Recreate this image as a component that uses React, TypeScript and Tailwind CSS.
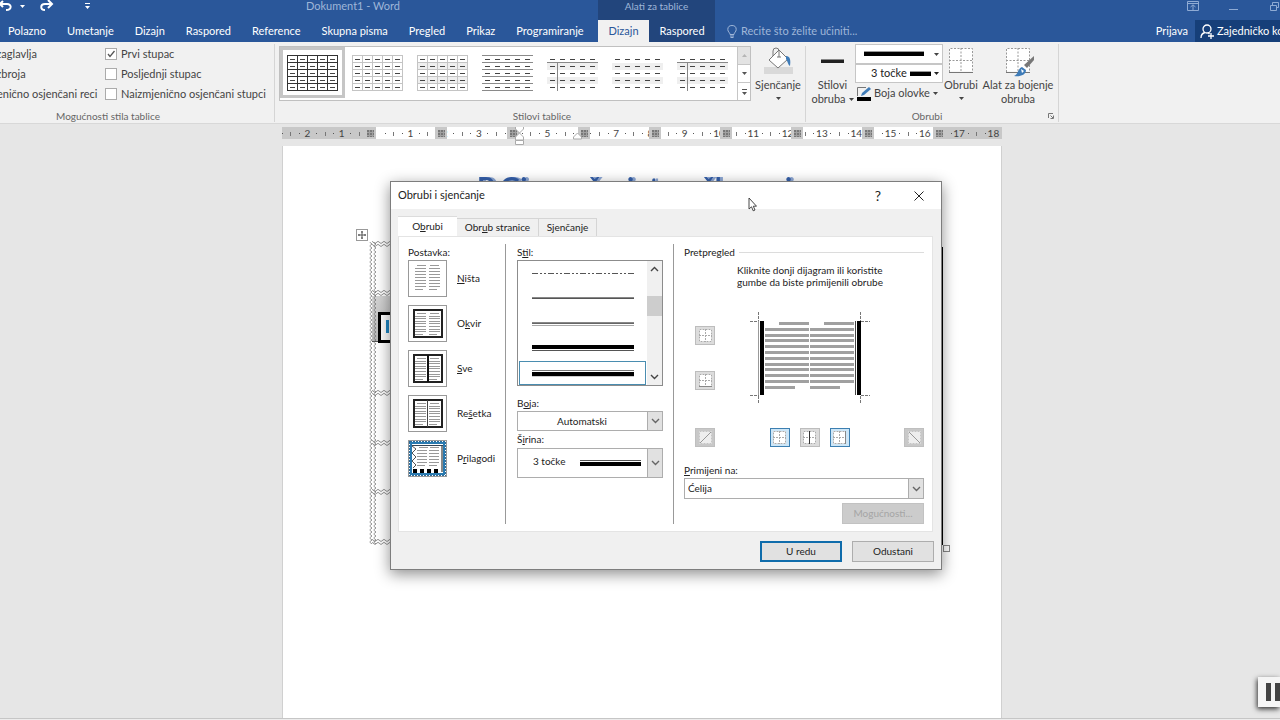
import type { ReactNode } from "react";
import { clsx } from "clsx";

const TABS = [
  "Polazno",
  "Umetanje",
  "Dizajn",
  "Raspored",
  "Reference",
  "Skupna pisma",
  "Pregled",
  "Prikaz",
  "Programiranje",
];

type StyleKind = "grid" | "gridLight" | "gridBanded" | "rows" | "column" | "banded";

const TABLE_STYLES: StyleKind[] = [
  "grid",
  "gridLight",
  "gridBanded",
  "rows",
  "column",
  "banded",
  "column",
];

function Caret({ className }: { className?: string }) {
  return (
    <svg width="5" height="3" viewBox="0 0 5 3" className={clsx("shrink-0", className)}>
      <path d="M0 0H5L2.5 3Z" fill="currentColor" />
    </svg>
  );
}

function Chevron({ up = false }: { up?: boolean }) {
  return (
    <svg width="9" height="6" viewBox="0 0 9 6" fill="none" stroke="currentColor">
      <path d={up ? "M1 5L4.5 1.5L8 5" : "M1 1L4.5 4.5L8 1"} strokeWidth="1.4" />
    </svg>
  );
}

/* Thumbnail of one table style: 5 x 5 cells with a dash in each */
function StyleThumb({ kind }: { kind: StyleKind }) {
  const steps = [0, 1, 2, 3, 4];
  const line = kind === "grid" ? "#333" : "#c4c4c4";
  const isGrid = kind === "grid" || kind === "gridLight" || kind === "gridBanded";
  const isBanded = kind === "gridBanded" || kind === "column" || kind === "banded";
  return (
    <svg width="53" height="38" viewBox="0 0 53 38" shapeRendering="crispEdges">
      {isBanded &&
        [1, 3].map((r) => (
          <rect key={r} x="1" y={r * 7 + 2} width="51" height="7" fill="#efefef" />
        ))}
      {isGrid &&
        [0, 1, 2, 3, 4, 5].map((i) => (
          <g key={i} fill={line}>
            <rect x={1 + i * 10} y="1" width="1" height="36" />
            <rect x="1" y={1 + i * 7} width="51" height="1" />
          </g>
        ))}
      {kind === "rows" &&
        [0, 1, 2, 3, 4, 5].map((i) => (
          <rect key={i} x="1" y={1 + i * 7} width="51" height="1" fill="#8a8a8a" />
        ))}
      {kind === "column" && (
        <g fill="#888">
          <rect x="1" y="8" width="51" height="1" />
          <rect x="11" y="8" width="1" height="29" />
        </g>
      )}
      {steps.map((r) =>
        steps.map((c) => (
          <rect
            key={`${r}-${c}`}
            x={4 + c * 10}
            y={5 + r * 7}
            width="5"
            height="1"
            fill="#444"
          />
        )),
      )}
    </svg>
  );
}

function TitleBar() {
  return (
    <header className="flex h-[42px] shrink-0 bg-[#2a579a] text-[11px] text-white">
      <div className="flex w-[598px] shrink-0 flex-col justify-between">
        <div className="flex h-3 items-center text-[#9fb6d8]">
          <div className="flex w-[306px] items-center text-white">
            <button type="button" aria-label="Poništi" className="flex items-center gap-2">
              <svg width="12" height="12" viewBox="0 0 12 12" fill="none" stroke="currentColor" strokeWidth="2">
                <path d="M0 4H7C12 4 12 10 6 10M3 1L0 4L3 7" />
              </svg>
              <Caret />
            </button>
            <button type="button" aria-label="Ponovi" className="ml-[15px]">
              <svg width="14" height="12" viewBox="0 0 14 12" fill="none" stroke="currentColor" strokeWidth="2">
                <path d="M12 4H5C0 4 0 10 5 10M8 0L12 4L8 8" />
              </svg>
            </button>
            <button type="button" aria-label="Prilagodi alatnu traku" className="ml-[31px]">
              <svg width="5" height="6" viewBox="0 0 5 6" fill="currentColor">
                <path d="M0 0H5V1H0ZM0 3H5L2.5 6Z" />
              </svg>
            </button>
          </div>
          <span className="leading-3">Dokument1 - Word</span>
        </div>
        <nav className="flex h-[22px] items-center gap-[21px] pl-2">
          {TABS.map((tab) => (
            <button key={tab} type="button" className="whitespace-nowrap">
              {tab}
            </button>
          ))}
        </nav>
      </div>

      <div className="flex w-[117px] shrink-0 flex-col justify-between bg-[#22457c]">
        <span className="text-center text-[10px] leading-3 text-[#9fb6d8]">Alati za tablice</span>
        <nav className="flex h-[22px]">
          <button type="button" className="w-[51px] bg-[#f1f1f1] text-[#2a579a]">
            Dizajn
          </button>
          <button type="button" className="flex-1">
            Raspored
          </button>
        </nav>
      </div>

      <div className="flex min-w-0 flex-1 flex-col justify-between">
        <div className="flex h-3 items-center justify-end text-[#8fabd4]">
          <button type="button" aria-label="Mogućnosti prikaza vrpce" className="mr-[30px]">
            <svg width="12" height="10" viewBox="0 0 12 10" fill="none" stroke="currentColor">
              <path d="M0.5 0.5H11.5V9.5H0.5ZM0.5 2.5H11.5M6 9V4M3.5 6L6 3.8L8.5 6" />
            </svg>
          </button>
          <button type="button" aria-label="Minimiziraj" className="mr-8">
            <svg width="9" height="9" viewBox="0 0 9 9">
              <path d="M0 7H9V8H0Z" fill="currentColor" />
            </svg>
          </button>
          <button type="button" aria-label="Vrati" className="mr-px">
            <svg width="9" height="9" viewBox="0 0 9 9" fill="none" stroke="currentColor">
              <path d="M0.5 3.5H6.5V8.5H0.5ZM2.5 3V0.5H8.5V5.5H7" />
            </svg>
          </button>
        </div>
        <div className="flex h-[22px] items-center">
          <label htmlFor="tell-me" className="pl-3 text-[#9fb6d8]" aria-label="Recite što želite učiniti">
            <svg width="10" height="13" viewBox="0 0 10 13" fill="none" stroke="currentColor">
              <path d="M3 9.5C3 7.5 0.8 7 0.8 4.5A4.2 4 0 0 1 9.2 4.5C9.2 7 7 7.5 7 9.5ZM3 11H7M3.5 12.5H6.5" />
            </svg>
          </label>
          <input
            id="tell-me"
            placeholder="Recite što želite učiniti..."
            className="ml-1 w-40 bg-transparent outline-none placeholder:text-[#9fb6d8]"
          />
          <button type="button" className="mr-[7px] ml-auto">
            Prijava
          </button>
          <button
            type="button"
            className="flex h-full w-[85px] items-center gap-[3px] overflow-hidden bg-[#163f79] pl-[5px] whitespace-nowrap"
          >
            <svg width="14" height="15" viewBox="0 0 14 15" fill="none" stroke="currentColor" strokeWidth="1.3" className="shrink-0">
              <circle cx="7" cy="5" r="4" />
              <path d="M1 14C1 11 3 9 5 8.5M8 8.5L9.5 10M11 9V15M8 12H14" />
            </svg>
            Zajedničko korištenje
          </button>
        </div>
      </div>
    </header>
  );
}

function Check({ id, label, checked = false }: { id: string; label: string; checked?: boolean }) {
  return (
    <label htmlFor={id} className="flex h-5 items-center gap-1 whitespace-nowrap">
      <span className="relative flex size-3 shrink-0">
        <input
          id={id}
          type="checkbox"
          defaultChecked={checked}
          className="peer size-3 appearance-none border border-[#ababab] bg-white"
        />
        <svg
          viewBox="0 0 12 12"
          fill="none"
          stroke="#555"
          strokeWidth="1.3"
          className="pointer-events-none absolute inset-0 hidden peer-checked:block"
        >
          <path d="M3 6L5 8.5L9.5 3" />
        </svg>
      </span>
      {label}
    </label>
  );
}

function GroupLabel({ children }: { children: ReactNode }) {
  return <div className="text-center text-[10px] leading-3 text-[#666]">{children}</div>;
}

function BorderGridIcon() {
  return (
    <svg width="24" height="25" viewBox="0 0 24 25" fill="none" stroke="#999">
      <rect x="0.5" y="0.5" width="23" height="23" fill="#fff" stroke="none" />
      <path d="M0.5 24V0.5H23.5V24M12 0V24M0 12.5H24" strokeDasharray="2 1.5" />
      <path d="M0 24.5H24" stroke="#777" />
    </svg>
  );
}

function Ribbon() {
  return (
    <section className="flex h-[82px] shrink-0 border-b border-[#d8d8d8] bg-[#f1f1f1] text-[11px] text-[#444]">
      {/* Table style options */}
      <div className="mt-[2px] mb-px flex w-[275px] shrink-0 flex-col justify-between border-r border-[#d5d5d5]">
        <div className="flex overflow-hidden">
          <div className="-ml-[52px] w-[157px] shrink-0">
            <Check id="header-row" label="Redak zaglavlja" />
            <Check id="total-row" label="Redak zbroja" />
            <Check id="banded-rows" label="Naizmjenično osjenčani reci" />
          </div>
          <div>
            <Check id="first-col" label="Prvi stupac" checked />
            <Check id="last-col" label="Posljednji stupac" />
            <Check id="banded-cols" label="Naizmjenično osjenčani stupci" />
          </div>
        </div>
        <div className="pr-[58px]">
          <GroupLabel>Mogućnosti stila tablice</GroupLabel>
        </div>
      </div>

      {/* Table styles */}
      <div className="mt-1 mb-px flex w-[531px] shrink-0 flex-col justify-between border-r border-[#d5d5d5] pl-1">
        <div className="flex">
          <div className="flex h-[55px] w-[472px] border border-[#c0c0c0] bg-white">
            {TABLE_STYLES.map((kind, i) => (
              <button
                key={i}
                type="button"
                aria-label={`Stil tablice ${i + 1}`}
                className={clsx(
                  "flex h-[51px] w-[65px] items-center justify-center border-[3px]",
                  i === 0 ? "border-[#c6c6c6]" : "border-transparent",
                )}
              >
                <StyleThumb kind={kind} />
              </button>
            ))}
            <div className="ml-auto flex w-[13px] flex-col divide-y divide-[#c6c6c6] border-l border-[#c6c6c6]">
              <button type="button" aria-label="Gore" className="flex flex-1 items-center justify-center bg-[#e3e3e3] text-[#b5b5b5]">
                <Caret className="rotate-180" />
              </button>
              <button type="button" aria-label="Dolje" className="flex flex-1 items-center justify-center text-[#555]">
                <Caret />
              </button>
              <button type="button" aria-label="Više" className="flex flex-1 items-center justify-center text-[#555]">
                <svg width="5" height="6" viewBox="0 0 5 6" fill="currentColor">
                  <path d="M0 0H5V1H0ZM0 3H5L2.5 6Z" />
                </svg>
              </button>
            </div>
          </div>
          <button type="button" className="flex flex-1 flex-col items-center pt-px">
            <svg width="29" height="28" viewBox="0 0 29 28" fill="none">
              <rect x="0" y="20" width="29" height="7" fill="#d9d9d9" />
              <path d="M5 13L15 3L24 12L14 21Z" fill="#fff" stroke="#777" />
              <path d="M9 9V4A3 3 0 0 1 15 4V10M13 10H17" stroke="#777" />
              <path d="M22 9C26 9 27 13 26 19C24 18 24 15 22 12Z" fill="#3f7cb8" />
            </svg>
            <span className="leading-5">Sjenčanje</span>
            <Caret className="mt-[2px]" />
          </button>
        </div>
        <GroupLabel>Stilovi tablice</GroupLabel>
      </div>

      {/* Borders */}
      <div className="mt-[2px] mb-px flex w-[253px] shrink-0 flex-col justify-between border-r border-[#d5d5d5]">
        <div className="flex">
          <button type="button" className="flex w-[49px] shrink-0 flex-col items-center pt-[2px] pl-1 leading-[14px]">
            <svg width="23" height="32" viewBox="0 0 23 32" shapeRendering="crispEdges">
              <rect y="13" width="23" height="1" fill="#888" />
              <rect y="14" width="23" height="3" fill="#222" />
            </svg>
            <span>Stilovi</span>
            <span className="flex items-center gap-[3px]">
              obruba <Caret />
            </span>
          </button>
          <div className="flex w-[88px] shrink-0 flex-col">
            <button type="button" aria-label="Stil crte" className="flex h-5 items-center justify-between border border-[#c6c6c6] bg-white pr-[3px] pl-2">
              <svg width="60" height="6" viewBox="0 0 60 6" shapeRendering="crispEdges">
                <rect width="60" height="1" fill="#999" />
                <rect y="1" width="60" height="4" fill="#000" />
              </svg>
              <Caret />
            </button>
            <button type="button" aria-label="Debljina crte" className="flex h-[19px] items-center justify-between border border-[#c6c6c6] bg-white pr-[3px] pl-[15px] text-[#222]">
              3 točke
              <svg width="21" height="6" viewBox="0 0 21 6" shapeRendering="crispEdges">
                <rect width="21" height="1" fill="#999" />
                <rect y="1" width="21" height="4" fill="#000" />
              </svg>
              <Caret />
            </button>
            <button type="button" className="flex h-[21px] items-center gap-[3px] pl-[2px] whitespace-nowrap">
              <svg width="14" height="14" viewBox="0 0 14 14" fill="none" className="shrink-0">
                <path d="M9 0.5H0.5V9" stroke="#777" />
                <path d="M4 9L5 6L12 0L14 2L7 8Z" fill="#3f7cb8" />
                <rect y="10" width="14" height="4" fill="#000" />
              </svg>
              Boja olovke
              <Caret />
            </button>
          </div>
          <button type="button" className="flex w-9 shrink-0 flex-col items-center pt-1">
            <BorderGridIcon />
            <span className="mt-[2px] leading-5">Obrubi</span>
            <Caret className="mt-[2px]" />
          </button>
          <button type="button" className="flex w-[78px] shrink-0 flex-col items-center pt-1 leading-[14px]">
            <span className="relative mb-[5px]">
              <BorderGridIcon />
              <svg width="21" height="22" viewBox="0 0 21 22" className="absolute top-2 left-2">
                <path d="M20 0V4L13 12L10 9Z" fill="#777" />
                <path d="M0 20C4 19 4 12 8 11L12 14C12 19 6 21 0 20Z" fill="#3f7cb8" />
                <path d="M7 13L10 15L8 17Z" fill="#fff" />
              </svg>
            </span>
            <span className="whitespace-nowrap">Alat za bojenje</span>
            <span>obruba</span>
          </button>
        </div>
        <div className="flex items-center">
          <div className="flex-1">
            <GroupLabel>Obrubi</GroupLabel>
          </div>
          <button type="button" aria-label="Obrubi i sjenčanje" className="mr-1">
            <svg width="6" height="6" viewBox="0 0 6 6" fill="none" stroke="#777">
              <path d="M0.5 5V0.5H5M2.5 2.5L5 5M5.5 2.5V5.5H2.5" />
            </svg>
          </button>
        </div>
      </div>
    </section>
  );
}

const CM = 34.3;
const COLUMN_MARKS = [82, 153, 225, 296, 367, 438, 509, 580, 651];

function Ruler() {
  const ticks = [];
  for (let n = -2; n <= 18; n++) {
    const x = 94 + n * CM;
    ticks.push(
      <g key={n}>
        {n !== 0 && (
          <text x={x} y="10" textAnchor="middle" fontSize="10" fill="#444">
            {Math.abs(n)}
          </text>
        )}
        <rect x={Math.round(x - CM / 2)} y="5" width="1" height="4" fill="#777" />
        <rect x={Math.round(x - CM / 4)} y="6" width="1" height="1" fill="#555" />
        <rect x={Math.round(x - (CM * 3) / 4)} y="6" width="1" height="1" fill="#555" />
      </g>,
    );
  }
  return (
    <svg width="720" height="18" viewBox="0 0 720 18" className="block">
      <rect width="720" height="12" fill="#fff" />
      <rect width="94" height="12" fill="#c8c8c8" />
      <rect x="657" width="63" height="12" fill="#c8c8c8" />
      {ticks}
      {COLUMN_MARKS.map((x) => (
        <g key={x} shapeRendering="crispEdges">
          <rect x={x} width="12" height="12" fill="#c8c8c8" />
          <rect x={x + 3} y="3" width="7" height="7" fill="#777" />
          <path d={`M${x + 3} 5.5H${x + 10}M${x + 3} 8.5H${x + 10}M${x + 5.5} 3V10M${x + 8.5} 3V10`} stroke="#a0a0a0" />
        </g>
      ))}
      <g fill="#fff" stroke="#aaa">
        <path d="M233.5 -1H241.5V2L237.5 6L233.5 2Z" />
        <path d="M233.5 13V10L237.5 6L241.5 10V13ZM233.5 13.5H241.5V17.5H233.5Z" />
        <path d="M291.5 12V10L295.5 6L299.5 10V12Z" />
      </g>
    </svg>
  );
}

/* Decorative heading at the top of the page */
function WordArt() {
  const parts: [number, string][] = [
    [194, "P"],
    [217, "Gi"],
    [305, "ž"],
    [344, "i"],
    [366, "t"],
    [419, "žb"],
    [502, "i"],
  ];
  return (
    <svg
      width="719"
      height="60"
      viewBox="0 0 719 60"
      fontSize="28"
      fontWeight="700"
      fill="#3560ab"
      className="drop-shadow-[3px_0_0_#8fa9d6]"
      aria-hidden="true"
    >
      {parts.map(([x, t]) => (
        <text key={x} x={x} y="52">
          {t}
        </text>
      ))}
    </svg>
  );
}

/* The document table, with its wavy border and move / resize handles */
function DocumentTable() {
  return (
    <svg width="600" height="330" viewBox="0 0 600 330" className="ml-[73px]" aria-hidden="true">
      <defs>
        <pattern id="wave-v" width="4" height="4" patternUnits="userSpaceOnUse">
          <path d="M0.5 0L3 2L0.5 4" fill="none" stroke="#666" strokeWidth="0.7" />
        </pattern>
        <pattern id="wave-h" width="6" height="3" patternUnits="userSpaceOnUse">
          <path d="M0 0.3L3 2.5L6 0.3" fill="none" stroke="#666" strokeWidth="0.7" />
        </pattern>
        <linearGradient id="cell" x1="0" x2="0" y1="0" y2="1">
          <stop offset="0" stopColor="#d4d4d4" />
          <stop offset="1" stopColor="#b8b8b8" />
        </linearGradient>
      </defs>
      <rect x="0.5" y="0.5" width="11" height="11" fill="#fff" stroke="#999" />
      <path d="M6 2V10M2 6H10M5 3H7M5 9H7M3 5V7M9 5V7" stroke="#555" fill="none" />
      <rect x="16" y="67" width="80" height="45" fill="url(#cell)" />
      <path d="M16 112.5H90" stroke="#555" />
      <rect x="23.5" y="84.5" width="60" height="28" fill="#fff" stroke="#000" strokeWidth="3" />
      <rect x="30" y="91" width="3" height="13" fill="#1f87c4" />
      {[12, 61, 161, 211, 260, 310].map((y) => (
        <g key={y} transform={`translate(16 ${y})`}>
          <rect width="568" height="6" fill="url(#wave-h)" />
        </g>
      ))}
      <g transform="translate(13 13)">
        <rect width="8" height="302" fill="url(#wave-v)" />
      </g>
      <rect x="583" y="18" width="4" height="298" fill="#000" />
      <rect x="587.5" y="316.5" width="6" height="6" fill="#fff" stroke="#888" />
    </svg>
  );
}

type Setting = "none" | "box" | "all" | "grid" | "custom";

const SETTINGS: { kind: Setting; label: ReactNode }[] = [
  { kind: "none", label: <><u>N</u>išta</> },
  { kind: "box", label: <>O<u>k</u>vir</> },
  { kind: "all", label: <><u>S</u>ve</> },
  { kind: "grid", label: <>Re<u>š</u>etka</> },
  { kind: "custom", label: <>P<u>r</u>ilagodi</> },
];

function SettingIcon({ kind }: { kind: Setting }) {
  const custom = kind === "custom";
  const count = custom ? 7 : 9;
  const rows = Array.from({ length: count }, (_, i) => i);
  const left = custom ? 9 : 7;
  const top = custom ? 7 : kind === "none" ? 5 : 8;
  const gap = kind === "none" || custom ? 3 : 2.6;
  return (
    <svg width="39" height="37" viewBox="0 0 39 37" shapeRendering="crispEdges">
      <rect x="0.5" y="0.5" width="38" height="36" fill="#fff" stroke="#999" />
      {rows.map((r) => {
        const first = r === 0;
        const w = first ? 9 : r === count - 1 ? 8 : custom ? 10 : 11;
        const y = Math.round(top + r * gap);
        return (
          <g key={r} fill="#999">
            <rect x={first ? left + 2 : left} y={y} width={w} height="1" />
            <rect x={first ? 22 : 21} y={y} width={w} height="1" />
          </g>
        );
      })}
      {(kind === "box" || kind === "all" || kind === "grid") && (
        <rect x="6" y="5" width="28" height="27" fill="none" stroke="#222" strokeWidth="2" />
      )}
      {kind === "all" && <rect x="19" y="5" width="2" height="27" fill="#111" />}
      {kind === "grid" && <rect x="19" y="5" width="1" height="27" fill="#444" />}
      {custom && (
        <g fill="none">
          <rect x="1.5" y="1.5" width="36" height="34" stroke="#2b6c9c" strokeDasharray="2 1" />
          <rect x="3" y="3" width="33" height="31" stroke="#2a7ab0" strokeWidth="2" />
          <path d="M4 5.5H35" stroke="#345" />
          <path d="M4 6L8 9L4 13L8 17L4 21L8 25L5 28" stroke="#555" shapeRendering="auto" />
          <path d="M33.5 6V32" stroke="#888" strokeWidth="2" />
          <path d="M5 31H32" stroke="#000" strokeWidth="4" strokeDasharray="4 3" />
        </g>
      )}
    </svg>
  );
}

function DropArrow() {
  return (
    <span className="pointer-events-none absolute inset-y-0 right-0 flex w-4 items-center justify-center border border-[#adadad] bg-[#e1e1e1] text-[#666]">
      <Chevron />
    </span>
  );
}

/* Each entry lists [offset, thickness, colour] of the strokes in a line style */
const LINE_STYLES: [number, number, string][][] = [
  [],
  [[4, 1, "#888"], [5, 1, "#555"]],
  [[4, 1, "#888"], [5, 1, "#666"], [7, 1, "#aaa"]],
  [[2, 4, "#000"], [7, 1, "#555"]],
  [[2, 1, "#777"], [4, 4, "#000"], [8, 1, "#ccc"]],
];

function StyleList() {
  return (
    <div className="flex h-[126px] border border-[#8c8c8c] bg-white">
      <div role="listbox" aria-labelledby="style-label" className="flex flex-1 flex-col gap-px pl-px">
        {LINE_STYLES.map((strokes, i) => (
          <button
            key={i}
            type="button"
            role="option"
            aria-label={`Crta ${i + 1}`}
            aria-selected={i === 4}
            className={clsx(
              "flex h-6 items-center justify-center border",
              i === 4 ? "border-[#4a8db0]" : "border-transparent",
            )}
          >
            <svg width="102" height="11" viewBox="0 0 102 11" shapeRendering="crispEdges">
              {i === 0 && <path d="M0 5.5H102" stroke="#555" strokeDasharray="6 2 2 2 2 2" />}
              {strokes.map(([y, h, fill]) => (
                <rect key={y} y={y} width="102" height={h} fill={fill} />
              ))}
            </svg>
          </button>
        ))}
      </div>
      <div className="ml-px flex w-[15px] flex-col items-center bg-[#f0f0f0] text-[#444]">
        <button type="button" aria-label="Pomakni gore" className="flex h-4 items-center">
          <Chevron up />
        </button>
        <div className="mt-[19px] h-5 w-full bg-[#cdcdcd]" />
        <button type="button" aria-label="Pomakni dolje" className="mt-auto flex h-4 items-center">
          <Chevron />
        </button>
      </div>
    </div>
  );
}

type Edge = "top" | "bottom" | "left" | "middle" | "right" | "up" | "down";

function EdgeButton({ edge, label, active = false }: { edge: Edge; label: string; active?: boolean }) {
  const diagonal = edge === "up" || edge === "down";
  return (
    <button
      type="button"
      aria-label={label}
      aria-pressed={active}
      disabled={diagonal}
      className={clsx(
        "flex h-[19px] w-5 items-center justify-center border",
        active && "border-[#3c7fb1] bg-[#cde6f7]",
        !active && !diagonal && "border-[#bdbdbd] bg-[#dcdcdc]",
        diagonal && "border-[#bfbfbf] bg-[#c8c8c8]",
      )}
    >
      <svg width="13" height="13" viewBox="0 0 13 13" fill="none" stroke={diagonal ? "#c4c4c4" : "#aaa"}>
        <rect width="13" height="13" fill={diagonal ? "#eee" : "#fff"} stroke="none" />
        <rect x="0.5" y="0.5" width="12" height="12" strokeDasharray="2 1" />
        {!diagonal && <path d="M6.5 0V13M0 6.5H13" strokeDasharray="2 1" />}
        {edge === "bottom" && <path d="M0 12.5H13" stroke="#888" />}
        {edge === "middle" && <path d="M6.5 0V13" stroke="#333" />}
        {edge === "right" && <path d="M12.5 0V13" stroke="#888" />}
        {edge === "up" && <path d="M1 12L12 1" stroke="#999" />}
        {edge === "down" && <path d="M1 1L12 12" stroke="#999" />}
      </svg>
    </button>
  );
}

function PreviewDiagram() {
  const rows = Array.from({ length: 12 }, (_, i) => i);
  return (
    <svg width="122" height="93" viewBox="0 0 122 93" shapeRendering="crispEdges">
      <g stroke="#777" strokeDasharray="3 1" fill="none">
        <path d="M1 10.5H10M9.5 1V10M112 10.5H121M111.5 1V10" />
        <path d="M1 84.5H10M9.5 85V93M112 84.5H121M111.5 85V93" />
      </g>
      {rows.map((r) => {
        const y = 11 + Math.round(r * 5.8);
        const w1 = r === 0 || r === 11 ? 30 : 44;
        return (
          <g key={r} fill="#a0a0a0">
            <rect x={r === 0 ? 30 : 16} y={y} width={w1} height="3" />
            <rect x={r === 0 ? 75 : 61} y={y} width={w1} height="3" />
          </g>
        );
      })}
      <rect x="9" y="10" width="1" height="74" fill="#999" />
      <rect x="11" y="10" width="4" height="74" fill="#000" />
      <rect x="106" y="10" width="1" height="74" fill="#444" />
      <rect x="108" y="10" width="4" height="74" fill="#000" />
    </svg>
  );
}

function BordersDialog() {
  return (
    <div
      role="dialog"
      aria-labelledby="dialog-title"
      className="absolute top-[181px] left-[390px] w-[552px] border border-[#7d7d7d] bg-[#f0f0f0] text-[10px] text-[#222] shadow-[0_4px_14px_rgba(0,0,0,0.45)]"
    >
      <div className="flex h-[27px] items-center bg-white pr-[17px] pl-[7px]">
        <h2 id="dialog-title" className="flex-1 text-[11px]">
          Obrubi i sjenčanje
        </h2>
        <button type="button" aria-label="Pomoć" className="mr-[33px] text-sm">
          ?
        </button>
        <button type="button" aria-label="Zatvori">
          <svg width="10" height="10" viewBox="0 0 10 10" stroke="#222">
            <path d="M0.5 0.5L9.5 9.5M9.5 0.5L0.5 9.5" />
          </svg>
        </button>
      </div>

      <div className="px-[7px] pt-[7px]">
        <div role="tablist" className="flex h-5 items-end">
          <button type="button" role="tab" aria-selected className="h-5 w-[59px] border-t border-[#dcdcdc] bg-white">
            O<u>b</u>rubi
          </button>
          <button type="button" role="tab" aria-selected={false} className="h-[18px] w-[82px] border-t border-r border-[#d5d5d5]">
            Obr<u>u</u>b stranice
          </button>
          <button type="button" role="tab" aria-selected={false} className="h-[18px] w-[58px] border-t border-r border-[#d5d5d5]">
            Sjenčanje
          </button>
        </div>

        <div className="mr-px flex h-[296px] border border-[#e4e4e4] bg-white py-[7px] pr-2 pl-[9px]">
          <section className="w-[98px] shrink-0 border-r border-[#999]">
            <h3 className="leading-4">Postavka:</h3>
            <div className="flex flex-col gap-2">
              {SETTINGS.map(({ kind, label }) => (
                <button key={kind} type="button" className="flex items-center gap-[10px]">
                  <SettingIcon kind={kind} />
                  <span>{label}</span>
                </button>
              ))}
            </div>
          </section>

          <section className="w-[168px] shrink-0 border-r border-[#999] pr-[10px] pl-[11px]">
            <h3 id="style-label" className="leading-4">
              S<u>t</u>il:
            </h3>
            <StyleList />
            <label htmlFor="color" className="mt-[9px] block leading-4">
              B<u>o</u>ja:
            </label>
            <div className="relative">
              <select id="color" className="block h-5 w-full appearance-none border border-[#adadad] bg-white pr-4 text-center">
                <option>Automatski</option>
              </select>
              <DropArrow />
            </div>
            <label htmlFor="width" className="block leading-[17px]">
              Š<u>i</u>rina:
            </label>
            <div className="relative">
              <select id="width" className="block h-[30px] w-full appearance-none border border-[#adadad] bg-white pb-[3px] pl-[15px]">
                <option>3 točke</option>
              </select>
              <svg width="61" height="6" viewBox="0 0 61 6" shapeRendering="crispEdges" className="pointer-events-none absolute top-3 right-[22px]">
                <rect width="61" height="1" fill="#555" />
                <rect y="2" width="61" height="4" fill="#000" />
              </svg>
              <DropArrow />
            </div>
          </section>

          <section className="min-w-0 flex-1 pl-[10px]">
            <h3 className="flex items-center gap-1 leading-4 after:h-px after:flex-1 after:bg-[#dcdcdc]">
              Pretpregled
            </h3>
            <p className="mt-1 pl-[53px] leading-3 whitespace-nowrap">
              Kliknite donji dijagram ili koristite
              <br />
              gumbe da biste primijenili obrube
            </p>
            <div className="mt-[23px] flex pl-[11px]">
              <div className="flex flex-col gap-[26px] pt-[15px]">
                <EdgeButton edge="top" label="Gornji obrub" />
                <EdgeButton edge="bottom" label="Donji obrub" />
              </div>
              <div className="ml-[34px]">
                <PreviewDiagram />
              </div>
            </div>
            <div className="mt-6 flex justify-between pl-[11px]">
              <EdgeButton edge="up" label="Dijagonala prema gore" />
              <div className="flex gap-[10px]">
                <EdgeButton edge="left" label="Lijevi obrub" active />
                <EdgeButton edge="middle" label="Unutarnji obrub" />
                <EdgeButton edge="right" label="Desni obrub" active />
              </div>
              <EdgeButton edge="down" label="Dijagonala prema dolje" />
            </div>
            <label htmlFor="apply-to" className="mt-[15px] block leading-4">
              <u>P</u>rimijeni na:
            </label>
            <div className="relative">
              <select id="apply-to" className="block h-[21px] w-full appearance-none border border-[#adadad] bg-white pl-[3px]">
                <option>Ćelija</option>
              </select>
              <DropArrow />
            </div>
            <button
              type="button"
              disabled
              className="mt-1 ml-auto block h-[21px] w-[82px] border border-[#c2c2c2] bg-[#cccccc] text-[#a5a5a5]"
            >
              Mogućnosti...
            </button>
          </section>
        </div>
      </div>

      <div className="flex justify-end gap-[10px] pt-[9px] pr-[7px] pb-[7px]">
        <button type="button" className="h-[21px] w-[82px] border-2 border-[#0f6cab] bg-[#e1e1e1]">
          U redu
        </button>
        <button type="button" className="h-[21px] w-[82px] border border-[#adadad] bg-[#e1e1e1]">
          Odustani
        </button>
      </div>
    </div>
  );
}

export default function App() {
  return (
    <div className="relative flex h-screen flex-col overflow-hidden bg-[#e6e6e6] font-['Lato','Open_Sans',sans-serif]">
      <TitleBar />
      <Ribbon />
      <main className="flex min-h-0 flex-1 flex-col items-center pt-[3px] pl-1">
        <Ruler />
        <div className="mt-px min-h-0 w-[720px] flex-1 overflow-hidden border-x border-[#d0d0d0] bg-white">
          <WordArt />
          <div className="pt-[23px]">
            <DocumentTable />
          </div>
        </div>
      </main>
      <footer className="flex h-[2px] shrink-0 border-t border-[#c6c6c6] bg-[#ececec]" />

      <BordersDialog />

      <svg width="9" height="15" viewBox="0 0 9 15" className="pointer-events-none absolute top-[197px] left-[748px]">
        <path d="M1 1V12L3.5 9.8L5.2 13.8L7 13L5.3 9.2H8.5Z" fill="#fff" stroke="#333" strokeWidth="0.9" />
      </svg>

      <button
        type="button"
        aria-label="Pauza"
        className="absolute right-0 bottom-[13px] flex h-[30px] w-[22px] items-center gap-1 overflow-hidden bg-[#f5f5f5] pl-2 shadow-[-1px_2px_5px_rgba(0,0,0,0.8)]"
      >
        <span className="h-[18px] w-[5px] shrink-0 bg-[#444]" />
        <span className="h-[18px] w-[5px] shrink-0 bg-[#444]" />
      </button>
    </div>
  );
}
